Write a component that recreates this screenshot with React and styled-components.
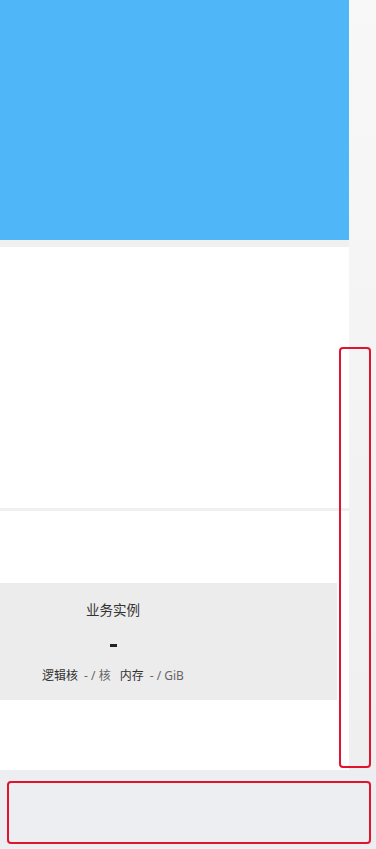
import React from "react";
import styled, { createGlobalStyle } from "styled-components";

const Global = createGlobalStyle`
  html, body { margin: 0; padding: 0; }
  body {
    width: 376px;
    height: 849px;
    overflow: hidden;
    background: #ffffff;
    font-family: "Noto Sans", "Noto Sans CJK SC", sans-serif;
  }
`;

const Page = styled.div`
  position: relative;
  width: 376px;
  height: 849px;
  display: flex;
  flex-direction: column;
`;

const Body = styled.div`
  display: flex;
  height: 770px;
`;

const Main = styled.main`
  width: 349px;
  display: flex;
  flex-direction: column;
  background: #ffffff;
`;

const Side = styled.aside`
  flex: 1;
  background: linear-gradient(#f8f8f8, #efefef);
`;

const Banner = styled.div`
  height: 240px;
  background: #4fb6f8;
`;

const Gap = styled.div`
  height: ${(p) => p.$h}px;
  background: #f0f0f0;
`;

const Blank = styled.div`
  height: 261px;
  background: #ffffff;
`;

const Section = styled.section`
  flex: 1;
  padding-top: 72px;
  background: #ffffff;
`;

const Card = styled.div`
  width: 337px;
  height: 117px;
  background: #ececec;
  display: grid;
  grid-template-columns: 226px 1fr;
`;

const Stat = styled.div`
  display: flex;
  flex-direction: column;
  align-items: center;
  padding-top: 17px;
`;

const Title = styled.div`
  font-size: 13.5px;
  line-height: 20px;
  color: #333333;
`;

const Value = styled.div`
  margin-top: 12px;
  height: 26px;
  display: flex;
  align-items: center;
  justify-content: center;
`;

const Dash = styled.span`
  display: block;
  width: 7px;
  height: 3px;
  background: #222222;
`;

const Meta = styled.div`
  margin-top: 9px;
  font-size: 12px;
  line-height: 18px;
  color: #333333;
  display: flex;
  gap: 9px;
  white-space: nowrap;
`;

const Muted = styled.span`
  color: #666666;
  margin-left: 6px;
`;

const Footer = styled.footer`
  flex: 1;
  background: #eceef1;
`;

const Mark = styled.div`
  position: absolute;
  left: ${(p) => p.$x}px;
  top: ${(p) => p.$y}px;
  width: ${(p) => p.$w}px;
  height: ${(p) => p.$h}px;
  box-sizing: border-box;
  border: 2.5px solid #e2142d;
  border-radius: 4px;
  pointer-events: none;
`;

export default function App() {
  return (
    <>
      <Global />
      <Page>
        <Body>
          <Main>
            <Banner />
            <Gap $h={7} />
            <Blank />
            <Gap $h={3} />
            <Section>
              <Card>
                <Stat>
                  <Title>业务实例</Title>
                  <Value>
                    <Dash />
                  </Value>
                  <Meta>
                    <span>
                      逻辑核<Muted>- / 核</Muted>
                    </span>
                    <span>
                      内存<Muted>- / GiB</Muted>
                    </span>
                  </Meta>
                </Stat>
              </Card>
            </Section>
          </Main>
          <Side />
        </Body>
        <Footer />
        <Mark $x={339} $y={347} $w={32} $h={421} />
        <Mark $x={7} $y={781} $w={364} $h={63} />
      </Page>
    </>
  );
}
